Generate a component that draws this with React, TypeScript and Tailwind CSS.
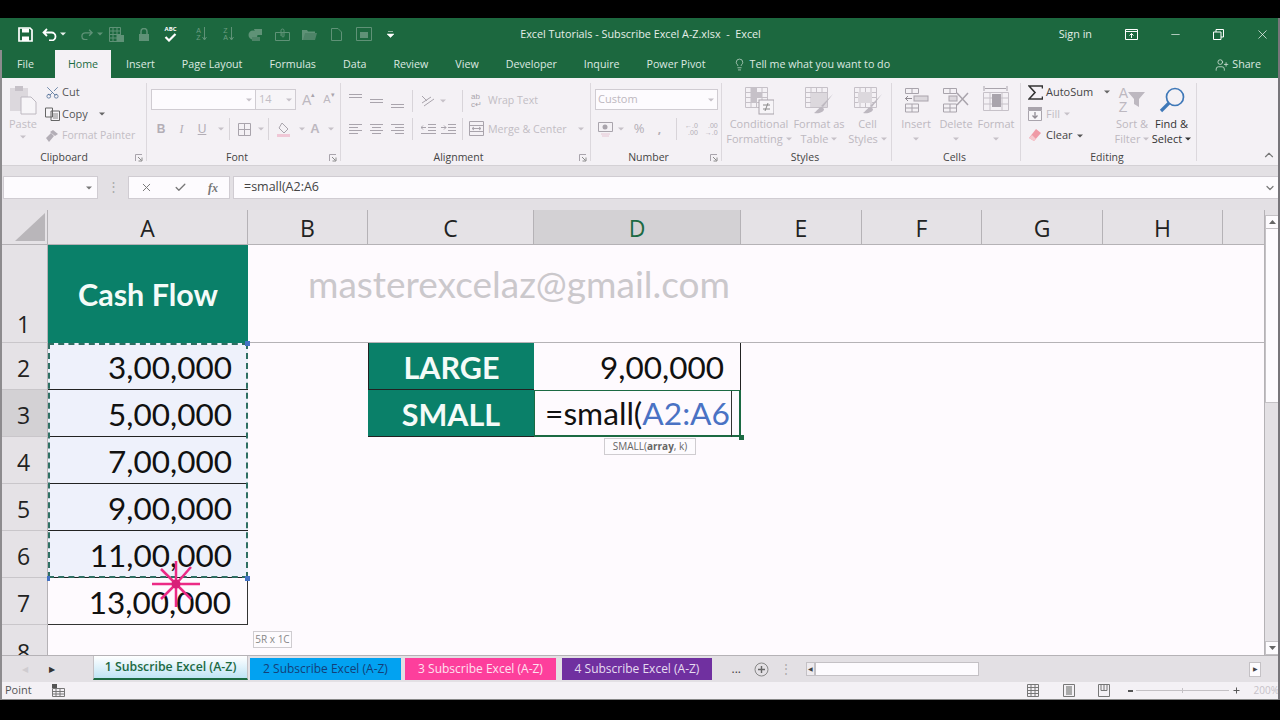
import { ReactNode } from "react"
import { Scissors, Lightbulb, UserPlus, X, Check, Minus, Plus, ChevronUp, ChevronDown } from "lucide-react"

const dim = "#c6c1c8"
const mid = "#a9a4ac"

function Caret({ color = "#9a969c" }: { color?: string }) {
    return (
        <svg width="6" height="4" viewBox="0 0 6 4" className="shrink-0">
            <path d="M0 0.5h6L3 3.5z" fill={color} />
        </svg>
    )
}

function Launcher() {
    return (
        <svg width="8" height="8" viewBox="0 0 8 8">
            <path d="M0.5 7V0.5H7" fill="none" stroke="#a9a4ac" />
            <path d="M3 3l3.5 3.5M7 3.5V7H3.5" fill="none" stroke="#8a8a8a" />
        </svg>
    )
}

function Qat({ children }: { children?: ReactNode }) {
    return <div className="w-[27px] h-[20px] flex items-center justify-center">{children}</div>
}

function QatBar() {
    const q = "#5f9277"
    return (
        <div className="flex items-center pl-[12px]">
            <Qat>
                <svg width="15" height="15" viewBox="0 0 15 15">
                    <path d="M1 1h11l2 2v11H1z" fill="none" stroke="#fff" strokeWidth="1.7" />
                    <path d="M4 1.5h7v4H4zM4 9.5h7V14H4z" fill="#fff" />
                </svg>
            </Qat>
            <div className="w-[27px] h-[20px] flex items-center gap-[3px] justify-end">
                <svg width="15" height="13" viewBox="0 0 15 13">
                    <path d="M5 1L1.5 4.5 5 8M2 4.500h7.500a4 4 0 0 1 0 8H7" fill="none" stroke="#fff" strokeWidth="1.8" />
                </svg>
                <Caret color="#e8f0eb" />
            </div>
            <div className="w-[13px]" />
            <div className="w-[27px] h-[20px] flex items-center gap-[3px] justify-end -ml-[3px]">
                <svg width="14" height="11" viewBox="0 0 15 13">
                    <path d="M10 1l3.5 3.5L10 8M13 4.500H5.500a4 4 0 0 0 0 8H8" fill="none" stroke={q} strokeWidth="1.6" />
                </svg>
                <Caret color={q} />
            </div>
            <Qat>
                <svg width="15" height="15" viewBox="0 0 15 15">
                    <path d="M.5.5h11v14H.5zM.5 4h11M.5 7.500h11M.5 11h11M4 .5v14M8 .5v14" fill="none" stroke={q} />
                    <rect x="8" y="8" width="7" height="7" fill={q} />
                </svg>
            </Qat>
            <Qat>
                <svg width="12" height="13" viewBox="0 0 12 13">
                    <path d="M3 6V3.500a3 3 0 0 1 6 0V6" fill="none" stroke={q} strokeWidth="1.500" />
                    <rect x="1" y="6" width="10" height="7" fill={q} />
                </svg>
            </Qat>
            <Qat>
                <div className="flex flex-col items-center">
                    <span className="text-[6px] leading-[7px] font-bold text-white">ABC</span>
                    <svg width="13" height="9" viewBox="0 0 13 9">
                        <path d="M1.500 4l3.500 3.500L11.500 1" fill="none" stroke="#fff" strokeWidth="2.200" />
                    </svg>
                </div>
            </Qat>
            <div className="w-[4px]" />
            <Qat>
                <div className="flex items-center gap-[1px]">
                    <span className="flex flex-col text-[7px] leading-[7px] font-['Liberation_Sans'] text-[#6d9d83]"><span>A</span><span>Z</span></span>
                    <svg width="5" height="14" viewBox="0 0 5 14"><path d="M2.500 0v13M.5 10l2 3 2-3" fill="none" stroke={q} /></svg>
                </div>
            </Qat>
            <Qat>
                <div className="flex items-center gap-[1px]">
                    <span className="flex flex-col text-[7px] leading-[7px] font-['Liberation_Sans'] text-[#6d9d83]"><span>Z</span><span>A</span></span>
                    <svg width="5" height="14" viewBox="0 0 5 14"><path d="M2.500 0v13M.5 10l2 3 2-3" fill="none" stroke={q} /></svg>
                </div>
            </Qat>
            <Qat>
                <svg width="16" height="14" viewBox="0 0 16 14">
                    <circle cx="5" cy="8" r="4.500" fill={q} />
                    <path d="M6 2h8v6H8z" fill={q} />
                    <rect x="4" y="10" width="8" height="4" fill="#4e8468" />
                </svg>
            </Qat>
            <Qat>
                <svg width="15" height="13" viewBox="0 0 15 13">
                    <path d="M.5 4.500h14v8H.5z" fill="none" stroke={q} />
                    <path d="M6 8V2.500a1.500 1.500 0 0 1 3 0V8a1 1 0 0 1-2 0V4" fill="none" stroke={q} />
                </svg>
            </Qat>
            <Qat>
                <svg width="16" height="12" viewBox="0 0 16 12">
                    <path d="M0 2h5l1 1.500h7V12H0z" fill={q} />
                    <path d="M3 5h12l-2 7H1z" fill="#4e8468" />
                </svg>
            </Qat>
            <Qat>
                <svg width="11" height="13" viewBox="0 0 11 13">
                    <path d="M.5.5h6.500l3.500 3.500v8.500H.5z" fill="none" stroke={q} />
                </svg>
            </Qat>
            <Qat>
                <svg width="16" height="14" viewBox="0 0 16 14">
                    <path d="M.5.5h15v13H.5z" fill="none" stroke={q} />
                    <rect x="4" y="5" width="8" height="6" fill={q} />
                </svg>
            </Qat>
            <Qat>
                <svg width="7" height="7" viewBox="0 0 7 7">
                    <path d="M1 .5h5M0 3h7L3.500 6.500z" fill="#fff" stroke="#fff" strokeWidth=".5" />
                </svg>
            </Qat>
        </div>
    )
}

function TitleBar() {
    return (
        <div className="h-[32px] bg-[#1c683f] flex items-center text-[#e4eee8] text-[10.8px]">
            <div className="w-[510px]"><QatBar /></div>
            <div className="w-[261px] text-center whitespace-nowrap">Excel Tutorials - Subscribe Excel A-Z.xlsx&nbsp; -&nbsp; Excel</div>
            <div className="flex-1" />
            <span className="mr-[33px]">Sign in</span>
            <svg width="13" height="11" viewBox="0 0 13 11" className="mr-[31px]">
                <path d="M.5.5h12v10H.5zM.5 2.500h12" fill="none" stroke="#fff" />
                <path d="M6.500 9V4.500M4.500 6.500l2-2 2 2" fill="none" stroke="#fff" />
            </svg>
            <Minus size={13} strokeWidth={1.2} className="mr-[31px] text-white" />
            <svg width="11" height="11" viewBox="0 0 11 11" className="mr-[31px]">
                <path d="M.5 3h7.500v7.500H.5zM3 3V.5h7.500V8H8" fill="none" stroke="#fff" />
            </svg>
            <X size={15} strokeWidth={1.1} className="mr-[10px] text-white" />
        </div>
    )
}

function TabBar() {
    const tabs = ["Insert", "Page Layout", "Formulas", "Data", "Review", "View", "Developer", "Inquire", "Power Pivot"]
    return (
        <div className="h-[28px] bg-[#1c683f] flex items-stretch text-[#dce9e1] text-[10.7px]">
            <div className="w-[55px] flex items-center pl-[17px] pt-[1px]">File</div>
            <div className="w-[56px] flex items-center justify-center pt-[1px] bg-[#f4f1f5] text-[#1d6b42]">Home</div>
            <div className="flex items-center gap-[27px] pl-[15px] pt-[1px] whitespace-nowrap">
                {tabs.map(t => <span key={t}>{t}</span>)}
            </div>
            <div className="flex items-center ml-[27px] gap-[4px] pt-[1px] whitespace-nowrap">
                <Lightbulb size={13} strokeWidth={1.2} />
                <span>Tell me what you want to do</span>
            </div>
            <div className="flex-1" />
            <div className="flex items-center gap-[3px] pr-[19px] pt-[1px]">
                <UserPlus size={14} strokeWidth={1.3} />
                <span>Share</span>
            </div>
        </div>
    )
}

function Group({ w, label, labelW, launcher, last, children }: { w: string; label: string; labelW: string; launcher?: boolean; last?: boolean; children: ReactNode }) {
    return (
        <div className={`${w} h-[78px] flex flex-col shrink-0 ${last ? "" : "border-r border-[#dcd8dd]"}`}>
            <div className="h-[66px] shrink-0 flex">{children}</div>
            <div className="h-[16px] shrink-0 flex items-center pt-[1px]">
                <div className={`${labelW} text-center text-[10.5px] font-medium text-[#444] whitespace-nowrap`}>{label}</div>
                <div className="flex-1 flex justify-end pr-[3px]">{launcher && <Launcher />}</div>
            </div>
        </div>
    )
}

function Big({ w, icon, l1, l2, dark }: { w: string; icon: ReactNode; l1: string; l2?: string; dark?: boolean }) {
    return (
        <div className={`${w} flex flex-col items-center text-[11px] leading-[15px] ${dark ? "text-[#333]" : "text-[#bdb8c0]"} shrink-0 whitespace-nowrap`}>
            <div className="h-[33px] flex items-center justify-center">{icon}</div>
            <div>{l1}</div>
            <div className="flex items-center gap-[3px] h-[15px]">{l2}<Caret color={dark ? "#333" : dim} /></div>
        </div>
    )
}

function Lines({ kind }: { kind: string }) {
    const d: Record<string, string> = {
        left: "M0 .5h13M0 3.500h9M0 6.500h13M0 9.500h9",
        center: "M0 .5h13M2 3.500h9M0 6.500h13M2 9.500h9",
        right: "M0 .5h13M4 3.500h9M0 6.500h13M4 9.500h9",
    }
    return <svg width="13" height="10" viewBox="0 0 13 10"><path d={d[kind]} stroke={mid} fill="none" /></svg>
}

function VAlign({ top }: { top: number }) {
    return (
        <svg width="13" height="14" viewBox="0 0 13 14">
            <path d={`M0 ${top + .5}h13M0 ${top + 3.5}h13`} stroke={mid} fill="none" />
        </svg>
    )
}

function Sep({ h = "h-[22px]" }: { h?: string }) {
    return <div className={`w-px ${h} bg-[#d8d4d9] shrink-0`} />
}

function GridIcon({ children }: { children?: ReactNode }) {
    return (
        <svg width="30" height="30" viewBox="0 0 30 30">
            <path d="M1.500 2.500h22v20h-22zM1.500 7.500h22M1.500 12.500h22M1.500 17.500h22M7 2.500v20M12.500 2.500v20M18 2.500v20" fill="none" stroke={dim} />
            {children}
        </svg>
    )
}

const brush = <path d="M29 9L19 22l-2-1zM18 22c-3 0-4 3-8 6 5 1 10-1 10-4z" fill="#bdb8c0" />

function Ribbon() {
    return (
        <div className="h-[87px] bg-[#f4f1f5] flex pt-[5px] text-[#bdb8c0] text-[11px]">
            <Group w="w-[147px]" label="Clipboard" labelW="w-[128px]" launcher>
                <div className="w-[44px] flex flex-col items-center pl-[2px]">
                    <svg width="28" height="30" viewBox="0 0 28 30" className="mt-[2px]">
                        <rect x="1" y="3" width="18" height="23" fill="#dcd8dd" />
                        <rect x="6" y="1" width="8" height="5" fill="#c6c1c8" />
                        <path d="M12 12h10l5 5v12H12z" fill="#f7f5f8" stroke="#bdb8c0" />
                    </svg>
                    <span className="mt-[1px] leading-[15px] text-[#c2bdc4]">Paste</span>
                    <span className="mt-[4px]"><Caret color={dim} /></span>
                </div>
                <div className="flex flex-col -mt-[2px] pl-[1px]">
                    <div className="h-[22px] flex items-center gap-[2px] text-[#555]">
                        <Scissors size={15} strokeWidth={1.2} className="text-[#4a6a94] -rotate-90" />
                        <span>Cut</span>
                    </div>
                    <div className="h-[22px] flex items-center gap-[2px] text-[#555]">
                        <svg width="15" height="14" viewBox="0 0 15 14">
                            <path d="M.5 1h7v9h-7zM6 4h8.500v9.500H6z" fill="#f7f5f8" stroke="#666" />
                            <path d="M8 7h5M8 9h5M8 11h5" stroke="#888" />
                        </svg>
                        <span>Copy</span>
                        <span className="ml-[9px]"><Caret color="#666" /></span>
                    </div>
                    <div className="h-[22px] flex items-center gap-[3px] text-[10.5px] text-[#c2bdc4] whitespace-nowrap">
                        <svg width="14" height="13" viewBox="0 0 14 13">
                            <path d="M8 0l5 4-3 2-5-4zM6 3L1 8l3 4 5-6z" fill="#b3aeb6" />
                        </svg>
                        <span>Format Painter</span>
                    </div>
                </div>
            </Group>

            <Group w="w-[194px]" label="Font" labelW="w-[180px]" launcher>
                <div className="flex flex-col pl-[4px] pt-[6px]">
                    <div className="flex items-center h-[21px]">
                        <div className="w-[105px] h-[21px] bg-[#fdfbfe] border border-[#d0ccd2] flex items-center justify-end pr-[3px]"><Caret color={dim} /></div>
                        <div className="w-[40px] h-[21px] bg-[#f7f5f8] border-y border-r border-[#d0ccd2] flex items-center justify-between px-[3px] text-[#c2bdc4]">14<Caret color={dim} /></div>
                        <span className="ml-[6px] text-[14px] leading-none text-[#bdb8c0] font-['Liberation_Sans']">A</span>
                        <span className="text-[7px] -mt-[8px] text-[#a9a4ac]">▴</span>
                        <span className="ml-[8px] text-[11px] leading-none text-[#bdb8c0] font-['Liberation_Sans']">A</span>
                        <span className="text-[7px] -mt-[8px] text-[#a9a4ac]">▾</span>
                    </div>
                    <div className="flex items-center h-[22px] mt-[8px] text-[12px] text-[#b3aeb6] font-['Liberation_Sans']">
                        <b className="w-[20px] text-center">B</b>
                        <i className="w-[21px] text-center font-['Liberation_Serif']">I</i>
                        <u className="w-[20px] text-center">U</u>
                        <span className="w-[17px] flex justify-center"><Caret color={dim} /></span>
                        <Sep />
                        <span className="w-[28px] flex justify-center">
                            <svg width="13" height="13" viewBox="0 0 13 13"><path d="M.5.5h12v12H.5zM6.500.5v12M.5 6.500h12" fill="none" stroke={mid} /></svg>
                        </span>
                        <span className="w-[10px]"><Caret color={dim} /></span>
                        <Sep />
                        <span className="w-[30px] flex justify-center">
                            <svg width="15" height="15" viewBox="0 0 15 15">
                                <path d="M5 1l6 6-4 4-5-5z" fill="none" stroke={mid} />
                                <path d="M0 12h13v3H0z" fill="#f0c7d6" />
                            </svg>
                        </span>
                        <span className="w-[8px]"><Caret color={dim} /></span>
                        <b className="w-[16px] text-center text-[13px] text-[#bdb8c0]">A</b>
                        <span className="ml-[5px]"><Caret color={dim} /></span>
                    </div>
                </div>
            </Group>

            <Group w="w-[250px]" label="Alignment" labelW="w-[235px]" launcher>
                <div className="flex flex-col pl-[8px] pt-[8px]">
                    <div className="flex items-center h-[20px]">
                        <span className="w-[21px] flex"><VAlign top={0} /></span>
                        <span className="w-[21px] flex"><VAlign top={5} /></span>
                        <span className="w-[21px] flex"><VAlign top={10} /></span>
                        <Sep />
                        <span className="w-[22px] flex justify-end">
                            <svg width="14" height="13" viewBox="0 0 14 13"><path d="M1 8l9-6M3 11l10-7M1 1l5 5" stroke={mid} fill="none" /></svg>
                        </span>
                        <span className="w-[11px] flex justify-end"><Caret color={dim} /></span>
                        <span className="w-[16px]" />
                        <Sep />
                        <div className="flex items-center ml-[8px] gap-[3px] text-[10.5px] text-[#c2bdc4] whitespace-nowrap">
                            <span className="w-[14px] text-[8px] leading-[8px] text-[#a9a4ac] flex flex-col font-['Liberation_Sans']"><span>ab</span><span>c↵</span></span>
                            <span>Wrap Text</span>
                        </div>
                    </div>
                    <div className="flex items-center h-[22px] mt-[7px]">
                        <span className="w-[21px] flex"><Lines kind="left" /></span>
                        <span className="w-[21px] flex"><Lines kind="center" /></span>
                        <span className="w-[21px] flex"><Lines kind="right" /></span>
                        <Sep />
                        <span className="w-[8px]" />
                        <span className="w-[20px] flex">
                            <svg width="15" height="10" viewBox="0 0 15 10"><path d="M7 .5h8M7 3.500h8M7 6.500h8M0 9.500h15M5 3.500H0M2 1.500l-2 2 2 2" stroke={mid} fill="none" /></svg>
                        </span>
                        <span className="w-[21px] flex">
                            <svg width="15" height="10" viewBox="0 0 15 10"><path d="M7 .5h8M7 3.500h8M7 6.500h8M0 9.500h15M0 3.500h5M3 1.500l2 2-2 2" stroke={mid} fill="none" /></svg>
                        </span>
                        <Sep />
                        <div className="flex items-center ml-[6px] gap-[4px] text-[10.7px] text-[#c2bdc4] whitespace-nowrap">
                            <svg width="15" height="15" viewBox="0 0 15 15"><path d="M.5.5h14v14H.5zM.5 4.500h14M.5 10.500h14M3 7.500h9M3 7.500l2-1.500M3 7.500l2 1.500M12 7.500l-2-1.500M12 7.500l-2 1.500" stroke={mid} fill="none" /></svg>
                            <span>Merge &amp; Center</span>
                            <span className="ml-[7px]"><Caret color={dim} /></span>
                        </div>
                    </div>
                </div>
            </Group>

            <Group w="w-[131px]" label="Number" labelW="w-[115px]" launcher>
                <div className="flex flex-col pl-[4px] pt-[6px]">
                    <div className="w-[123px] h-[21px] bg-[#fdfbfe] border border-[#d0ccd2] flex items-center justify-between pl-[2px] pr-[3px] text-[#bdb8c0]">Custom<Caret color={dim} /></div>
                    <div className="flex items-center h-[22px] mt-[8px] pl-[3px]">
                        <svg width="15" height="15" viewBox="0 0 15 15"><path d="M.5.5h14v9H.5z" fill="none" stroke={mid} /><circle cx="7" cy="5" r="2.500" fill={mid} /><path d="M3 12h9M4 14h7" stroke="#e6c6d4" /></svg>
                        <span className="ml-[5px] w-[10px]"><Caret color={dim} /></span>
                        <span className="w-[22px] text-center text-[13px] text-[#b3aeb6]">%</span>
                        <span className="w-[19px] text-center text-[12px] font-bold text-[#b3aeb6]">,</span>
                        <span className="w-[7px]" />
                        <Sep />
                        <div className="flex ml-[8px] gap-[7px] text-[7px] leading-[7px] text-[#b3aeb6] font-['Liberation_Sans'] whitespace-nowrap">
                            <span className="flex flex-col items-end"><span>←.0</span><span>.00</span></span>
                            <span className="flex flex-col items-end"><span>.00</span><span>→.0</span></span>
                        </div>
                    </div>
                </div>
            </Group>

            <Group w="w-[170px]" label="Styles" labelW="w-[170px]">
                <div className="flex pl-[2px]">
                    <Big w="w-[70px]" l1="Conditional" l2="Formatting" icon={
                        <GridIcon>
                            <rect x="7" y="2.500" width="6" height="15" fill={dim} />
                            <rect x="13" y="8" width="5" height="5" fill={dim} />
                            <rect x="15" y="15" width="15" height="14" fill="#f7f5f8" stroke="#a9a4ac" />
                            <path d="M19 20h7M19 24h7M24 18l-3 8" stroke="#8a8a8a" fill="none" />
                        </GridIcon>
                    } />
                    <Big w="w-[50px]" l1="Format as" l2="Table" icon={
                        <GridIcon>
                            <rect x="7" y="8" width="16" height="14" fill="#dcd8dd" />
                            {brush}
                        </GridIcon>
                    } />
                    <Big w="w-[47px]" l1="Cell" l2="Styles" icon={
                        <GridIcon>
                            <rect x="5" y="7" width="14" height="11" fill="#dcd8dd" />
                            {brush}
                        </GridIcon>
                    } />
                </div>
            </Group>

            <Group w="w-[129px]" label="Cells" labelW="w-[129px]">
                <div className="flex pl-[4px]">
                    <Big w="w-[40px]" l1="Insert" icon={
                        <svg width="26" height="28" viewBox="0 0 26 28">
                            <path d="M2.500 2.500h13v5h-13zM9 2.500v5M2.500 18h13v8h-13zM2.500 22h13M9 18v8" fill="none" stroke={mid} />
                            <rect x="11" y="10" width="14" height="5" fill="#dcd8dd" stroke={mid} />
                            <path d="M2 12.500h7M5 10l-2.500 2.500L5 15" stroke="#8f8a92" fill="none" />
                        </svg>
                    } />
                    <Big w="w-[40px]" l1="Delete" icon={
                        <svg width="28" height="28" viewBox="0 0 28 28">
                            <path d="M1.500 2.500h13v5h-13zM8 2.500v5M1.500 18h13v8h-13zM1.500 22h13M8 18v8" fill="none" stroke={mid} />
                            <rect x="7" y="10" width="8" height="5" fill="#dcd8dd" stroke={mid} />
                            <path d="M15 7l11 12M26 7L15 19" stroke="#a9a4ac" strokeWidth="1.500" />
                        </svg>
                    } />
                    <Big w="w-[40px]" l1="Format" icon={
                        <svg width="28" height="30" viewBox="0 0 28 30">
                            <path d="M2 1v5M25 1v5M3 3.500h21" stroke={mid} fill="none" />
                            <path d="M1.500 7.500h25v18h-25zM1.500 13h25M1.500 19h25M8 7.500v18M20 7.500v18" fill="none" stroke={dim} />
                            <rect x="10" y="9" width="9" height="13" fill="#a9a4ac" />
                        </svg>
                    } />
                </div>
            </Group>

            <Group w="w-[176px]" label="Editing" labelW="w-[174px]">
                <div className="flex flex-col pl-[7px] -mt-[2px] w-[92px] shrink-0">
                    <div className="h-[22px] flex items-center gap-[3px] text-[#444]">
                        <svg width="15" height="15" viewBox="0 0 15 15"><path d="M14.500 3.500V1H1l6 6.500L1 14h13.500v-2.500" fill="none" stroke="#333" strokeWidth="1.600" /></svg>
                        <span>AutoSum</span>
                        <span className="ml-[8px]"><Caret color="#666" /></span>
                    </div>
                    <div className="h-[22px] flex items-center gap-[4px] text-[#c2bdc4]">
                        <svg width="14" height="14" viewBox="0 0 14 14"><path d="M.5 3.500h13v10H.5z" fill="#f7f5f8" stroke={mid} /><rect x="0" y="0" width="14" height="3" fill={mid} /><path d="M7 5v6M4.500 8.500L7 11l2.500-2.500" stroke="#8f8a92" fill="none" strokeWidth="1.300" /></svg>
                        <span>Fill</span>
                        <Caret color={dim} />
                    </div>
                    <div className="h-[21px] flex items-center gap-[4px] text-[#444]">
                        <svg width="14" height="13" viewBox="0 0 14 13"><path d="M8 0l5 4-7 8-5-3z" fill="#ef9aa6" /><path d="M1 9l3-3 4 4-2 2z" fill="#f6c8ce" /></svg>
                        <span>Clear</span>
                        <Caret color="#555" />
                    </div>
                </div>
                <Big w="w-[38px]" l1="Sort &amp;" l2="Filter" icon={
                    <div className="flex items-center">
                        <span className="flex flex-col text-[14px] leading-[14px] text-[#bdb8c0] font-['Liberation_Sans']"><span>A</span><span>Z</span></span>
                        <svg width="17" height="15" viewBox="0 0 17 15"><path d="M0 0h17l-6 7v8l-5-3V7z" fill="#bdb8c0" /></svg>
                    </div>
                } />
                <Big w="w-[41px]" dark l1="Find &amp;" l2="Select" icon={
                    <svg width="28" height="28" viewBox="0 0 28 28">
                        <circle cx="17" cy="11" r="8.500" fill="none" stroke="#3f78b8" strokeWidth="1.700" />
                        <path d="M11 17l-8 8" stroke="#3f78b8" strokeWidth="3.200" />
                    </svg>
                } />
            </Group>
            <div className="flex-1 flex items-end justify-end pr-[4px] pb-[3px]">
                <ChevronUp size={14} strokeWidth={2} className="text-[#777]" />
            </div>
        </div>
    )
}

function FormulaBar() {
    return (
        <div className="h-[23px] bg-[#e3e0e4] flex items-stretch text-[12.5px] text-[#444]">
            <div className="ml-[3px] w-[95px] bg-[#fdfbfe] border border-[#d0ccd2] flex items-center justify-end pr-[5px] shrink-0"><Caret color="#777" /></div>
            <div className="w-[30px] flex items-center justify-center shrink-0">
                <span className="text-[#aaa] leading-none">⋮</span>
            </div>
            <div className="w-[102px] bg-[#fdfbfe] border border-[#d0ccd2] flex items-center text-[#777] shrink-0">
                <span className="w-[34px] flex justify-center"><X size={13} strokeWidth={1.8} /></span>
                <span className="w-[34px] flex justify-center"><Check size={13} strokeWidth={2.4} /></span>
                <i className="w-[32px] text-center font-['Liberation_Serif'] text-[12px] font-bold">fx</i>
            </div>
            <div className="ml-[3px] flex-1 bg-[#fdfbfe] border border-[#d0ccd2] flex items-center justify-between pl-[10px] pr-[3px]">
                <span>=small(A2:A6</span>
                <ChevronDown size={12} strokeWidth={2.4} className="text-[#777]" />
            </div>
        </div>
    )
}

const colHead = "flex items-center justify-center pt-[3px] border-r border-b border-[#b5b2b6] text-[23px] font-['Open_Sans']"
const rowHead = "flex items-center justify-center border-b border-[#c9c6ca] border-r-[#b5b2b6] border-r text-[23px] text-[#222] font-['Open_Sans']"
const amount = "flex items-center justify-end pr-[16px] pt-[3px] text-[31.5px] text-[#111] font-['Lato']"
const head = "flex items-center justify-center bg-[#0a8069] text-[30.5px] font-bold text-[#f4fbf8] font-['Lato']"

function Sheet() {
    const amounts = ["3,00,000", "5,00,000", "7,00,000", "9,00,000", "11,00,000"]
    return (
        <div className="relative flex-1 flex bg-[#fefafe] min-h-0 overflow-hidden">
            <div className="w-[1264px] grid grid-cols-[48px_200px_120px_166px_207px_121px_120px_121px_120px_41px] grid-rows-[35px_98px_repeat(6,47px)_30px]">
                <div className="bg-[#e5e2e6] border-b border-r border-[#b5b2b6] flex items-end justify-end pr-[2px] pb-[3px]">
                    <svg width="30" height="28" viewBox="0 0 30 28"><path d="M30 0v28H0z" fill="#b9b6ba" /></svg>
                </div>
                <div className={`${colHead} bg-[#e5e2e6] text-[#222]`}>A</div>
                <div className={`${colHead} bg-[#e5e2e6] text-[#222]`}>B</div>
                <div className={`${colHead} bg-[#e5e2e6] text-[#222]`}>C</div>
                <div className={`${colHead} bg-[#d3d1d4] text-[#1c6a43]`}>D</div>
                <div className={`${colHead} bg-[#e5e2e6] text-[#222]`}>E</div>
                <div className={`${colHead} bg-[#e5e2e6] text-[#222]`}>F</div>
                <div className={`${colHead} bg-[#e5e2e6] text-[#222]`}>G</div>
                <div className={`${colHead} bg-[#e5e2e6] text-[#222]`}>H</div>
                <div className="bg-[#e5e2e6] border-b border-[#b5b2b6]" />

                <div className={`${rowHead} bg-[#e5e2e6] items-end pb-[1px]`}>1</div>
                <div className={`${head} pt-[1px]`}>Cash Flow</div>
                <div className="col-span-8 border-b border-[#b5b2b6] pl-[60px] pt-[16px] text-[37px] leading-[46px] text-[#cbc8cc] font-['Lato'] whitespace-nowrap">masterexcelaz@gmail.com</div>

                <div className={`${rowHead} bg-[#e5e2e6] pt-[4px]`}>2</div>
                <div className={`${amount} bg-[#eef1fb] border-b border-[#222]`}>{amounts[0]}</div>
                <div />
                <div className={`${head} pt-[3px] border-b border-[#222] border-l`}>LARGE</div>
                <div className={`${amount} border-r border-[#222]`}>9,00,000</div>
                <div className="col-span-5" />

                <div className={`${rowHead} bg-[#d3d1d4] pt-[4px]`}>3</div>
                <div className={`${amount} bg-[#eef1fb] border-b border-[#222]`}>{amounts[1]}</div>
                <div />
                <div className={`${head} pt-[3px] border-b border-[#222]`}>SMALL</div>
                <div className="flex items-center pl-[10px] pt-[2px] text-[31.7px] text-[#111] font-['Lato'] whitespace-nowrap border-2 border-[#1c6a43] border-t-[1px] border-l-[1px]">
                    =small(<span className="text-[#4a72c4]">A2:A6</span>
                    <span className="ml-[1px] w-px h-[46px] bg-[#333]" />
                </div>
                <div className="col-span-5" />

                {[4, 5, 6].map((n, i) => (
                    <div key={n} className="contents">
                        <div className={`${rowHead} bg-[#e5e2e6] pt-[4px]`}>{n}</div>
                        <div className={`${amount} bg-[#eef1fb] border-b border-[#222]`}>{amounts[i + 2]}</div>
                        <div className="col-span-8" />
                    </div>
                ))}

                <div className={`${rowHead} bg-[#e5e2e6] pt-[4px]`}>7</div>
                <div className={`${amount} border-b border-r border-[#333]`}>13,00,000</div>
                <div className="col-span-8" />

                <div className={`${rowHead} bg-[#e5e2e6] items-start pt-[10px] border-b-0 overflow-hidden`}>8</div>
                <div className="col-span-9" />
            </div>

            <div className="w-[16px] bg-[#e3e0e4] border-l border-[#b5b2b6] flex flex-col">
                <div className="h-[5px]" />
                <div className="h-[14px] bg-[#fdfbfe] border border-[#c4c1c5] flex items-center justify-center">
                    <svg width="7" height="4" viewBox="0 0 7 4"><path d="M3.500 0L7 4H0z" fill="#666" /></svg>
                </div>
                <div className="h-[174px] bg-[#fdfbfe] border-x border-b border-[#c4c1c5]" />
                <div className="flex-1" />
                <div className="h-[14px] bg-[#fdfbfe] border border-[#c4c1c5] flex items-center justify-center">
                    <svg width="7" height="4" viewBox="0 0 7 4"><path d="M3.500 4L7 0H0z" fill="#666" /></svg>
                </div>
            </div>

            {/* copy range around A2:A6 */}
            <div className="absolute left-[48px] top-[133px] w-[200px] h-[235px] border-2 border-dashed border-[#2e6f63] pointer-events-none" />
            <div className="absolute left-[245px] top-[131px] w-[5px] h-[5px] bg-[#4472c4]" />
            <div className="absolute left-[245px] top-[366px] w-[5px] h-[5px] bg-[#4472c4]" />
            <div className="absolute left-[47px] top-[366px] w-[3px] h-[5px] bg-[#4472c4]" />
            <div className="absolute left-[739px] top-[225px] w-[5px] h-[5px] bg-[#1c6a43]" />

            {/* click marker */}
            <svg width="50" height="50" viewBox="0 0 50 50" className="absolute left-[151px] top-[349px]">
                <path d="M25 2v46M1 25h48M10 40L25 25M40 8L25 25M10 10l15 15M40 40L25 25" stroke="#ec2a85" strokeWidth="2.500" />
                <circle cx="25" cy="25" r="4.500" fill="#d81f78" />
            </svg>

            <div className="absolute left-[604px] top-[228px] h-[17px] w-[92px] bg-[#fdfbfe] border border-[#cfccd0] flex items-center justify-center text-[10px] text-[#666] whitespace-nowrap">
                SMALL(<b>array</b>, k)
            </div>
            <div className="absolute left-[253px] top-[421px] h-[17px] w-[39px] bg-[#fdfbfe] border border-[#cfccd0] flex items-center justify-center text-[10px] text-[#888] whitespace-nowrap">
                5R x 1C
            </div>
        </div>
    )
}

function SheetTabs() {
    return (
        <div className="h-[27px] bg-[#e3e0e4] border-t border-[#b5b2b6] flex items-stretch text-[12px] font-medium whitespace-nowrap">
            <div className="w-[93px] flex items-center pl-[22px] gap-[21px] text-[8px]">
                <span className="text-[#cfccd0]">◀</span>
                <span className="text-[#333]">▶</span>
            </div>
            <div className="w-[155px] flex items-center justify-center bg-gradient-to-b from-[#ffffff] to-[#bfe4f5] border-b-2 border-[#1c6a43] border-x border-x-[#c4c1c5] mb-[2px] text-[12.3px] text-[#1c6a43] font-semibold">1 Subscribe Excel (A-Z)</div>
            <div className="w-[151px] ml-[2px] my-[2px] flex items-center justify-center bg-[#02a2f1] text-[#143f78]">2 Subscribe Excel (A-Z)</div>
            <div className="w-[151px] ml-[4px] my-[2px] flex items-center justify-center bg-[#fd3f9c] text-[#fde2ef]">3 Subscribe Excel (A-Z)</div>
            <div className="w-[150px] ml-[6px] my-[2px] flex items-center justify-center bg-[#7030a0] text-[#e6dcf0]">4 Subscribe Excel (A-Z)</div>
            <div className="w-[29px] flex items-center justify-end text-[#444] pb-[1px]">...</div>
            <div className="w-[28px] flex items-center justify-end">
                <svg width="15" height="15" viewBox="0 0 15 15">
                    <circle cx="7.500" cy="7.500" r="6.500" fill="none" stroke="#888" />
                    <path d="M7.500 4v7M4 7.500h7" stroke="#666" strokeWidth="1.400" />
                </svg>
            </div>
            <div className="w-[33px] flex items-center justify-center text-[#aaa]">⋮</div>
            <div className="flex items-center ml-[4px] flex-1 pr-[19px]">
                <div className="w-[9px] h-[14px] bg-[#eeebef] border border-[#c4c1c5] flex items-center justify-center text-[6px] text-[#444]">◀</div>
                <div className="w-[164px] h-[14px] bg-[#fdfbfe] border border-[#c4c1c5]" />
                <div className="flex-1" />
                <div className="w-[12px] h-[15px] bg-[#fdfbfe] border border-[#c4c1c5] flex items-center justify-center text-[6px] text-[#444]">▶</div>
            </div>
        </div>
    )
}

function StatusBar() {
    return (
        <div className="h-[18px] bg-[#f4f1f5] border-b border-[#888] flex items-center text-[11px] text-[#555]">
            <span className="pl-[5px] w-[52px]">Point</span>
            <svg width="13" height="13" viewBox="0 0 13 13">
                <path d="M.5 4.500h12v8H.5zM.5 7.500h12M.5 10h12M4 4.500v8M8 4.500v8" fill="none" stroke="#777" />
                <rect x="0" y="0" width="5" height="4" fill="#555" />
            </svg>
            <div className="flex-1" />
            <svg width="12" height="13" viewBox="0 0 12 13" className="mr-[24px]">
                <path d="M.5.5h11v12H.5zM.5 3.500h11M.5 6.500h11M.5 9.500h11M4 .5v12M8 .5v12" fill="none" stroke="#777" />
            </svg>
            <svg width="12" height="13" viewBox="0 0 12 13" className="mr-[23px]">
                <path d="M.5.5h11v12H.5z" fill="none" stroke="#777" />
                <rect x="3" y="2" width="6" height="9" fill="#aaa" />
            </svg>
            <svg width="12" height="13" viewBox="0 0 12 13" className="mr-[18px]">
                <path d="M.5.5h11v12H.5zM6 .5v6M3 .5v6H9V.5" fill="none" stroke="#777" />
            </svg>
            <span className="w-[5px] h-[2px] bg-[#555]" />
            <div className="w-[93px] h-px bg-[#c4c1c5] mx-[3px] flex justify-center">
                <span className="w-px h-[5px] -mt-[2px] bg-[#c4c1c5]" />
            </div>
            <Plus size={9} strokeWidth={2.6} className="text-[#555]" />
            <span className="ml-[13px] pr-[1px] text-[10px] text-[#c6c1c8]">200%</span>
        </div>
    )
}

export default function App() {
    return (
        <div className="relative w-[1280px] h-[720px] bg-black flex flex-col overflow-hidden font-['Open_Sans']">
            <div className="h-[18px] shrink-0" />
            <TitleBar />
            <TabBar />
            <Ribbon />
            <div className="h-[11px] bg-[#e3e0e4] border-t border-[#d4d1d5]" />
            <FormulaBar />
            <div className="h-[11px] bg-[#e3e0e4]" />
            <Sheet />
            <SheetTabs />
            <StatusBar />
            <div className="h-[20px] shrink-0" />
            <div className="absolute left-0 top-[50px] bottom-[20px] w-[2px] bg-[#8d8b8e]" />
            <div className="absolute right-0 top-[18px] bottom-[20px] w-[2px] bg-[#77757a]" />
        </div>
    )
}
